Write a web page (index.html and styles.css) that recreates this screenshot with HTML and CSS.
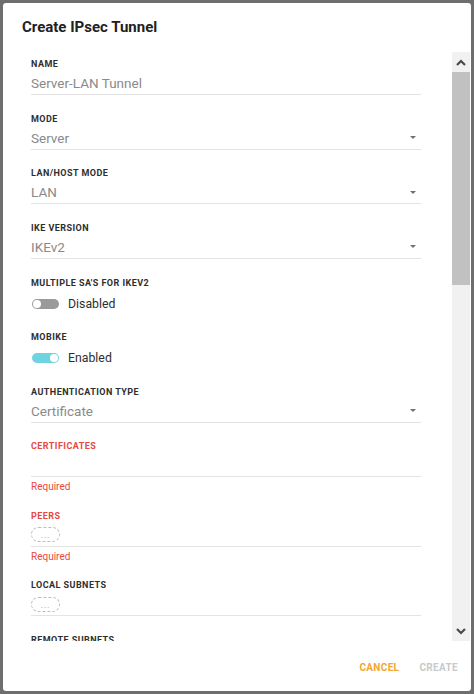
FILE: index.html
```html
<!DOCTYPE html>
<html lang="en">
<head>
<meta charset="utf-8">
<title>Create IPsec Tunnel</title>
<link rel="stylesheet" href="styles.css">
</head>
<body>
<div class="dialog">
  <div class="dialog-title">Create IPsec Tunnel</div>
  <div class="dialog-body">
    <div class="content">
      <div class="field">
        <div class="label">Name</div>
        <div class="input"><span class="value">Server-LAN Tunnel</span></div>
      </div>
      <div class="field">
        <div class="label">Mode</div>
        <div class="input"><span class="value">Server</span><span class="caret"></span></div>
      </div>
      <div class="field">
        <div class="label">LAN/Host Mode</div>
        <div class="input"><span class="value">LAN</span><span class="caret"></span></div>
      </div>
      <div class="field">
        <div class="label">IKE Version</div>
        <div class="input"><span class="value">IKEv2</span><span class="caret"></span></div>
      </div>
      <div class="field toggle-field">
        <div class="label">Multiple SA's for IKEv2</div>
        <div class="toggle-row"><span class="switch"><span class="knob"></span></span><span class="toggle-text">Disabled</span></div>
      </div>
      <div class="field toggle-field">
        <div class="label">MOBIKE</div>
        <div class="toggle-row"><span class="switch on"><span class="knob"></span></span><span class="toggle-text">Enabled</span></div>
      </div>
      <div class="field">
        <div class="label">Authentication Type</div>
        <div class="input"><span class="value">Certificate</span><span class="caret"></span></div>
      </div>
      <div class="field error">
        <div class="label">Certificates</div>
        <div class="input"></div>
        <div class="helper">Required</div>
      </div>
      <div class="field error">
        <div class="label">Peers</div>
        <div class="input"><span class="chip">...</span></div>
        <div class="helper">Required</div>
      </div>
      <div class="field">
        <div class="label">Local Subnets</div>
        <div class="input"><span class="chip">...</span></div>
      </div>
      <div class="field">
        <div class="label">Remote Subnets</div>
        <div class="input"><span class="chip">...</span></div>
      </div>
    </div>
    <div class="scrollbar">
      <div class="sb-btn"><svg width="10" height="7" viewBox="0 0 10 7"><path d="M1 6 L5 2 L9 6" fill="none" stroke="#4a4a4a" stroke-width="2.2"/></svg></div>
      <div class="sb-thumb"></div>
      <div class="sb-track"></div>
      <div class="sb-btn"><svg width="10" height="7" viewBox="0 0 10 7"><path d="M1 1 L5 5 L9 1" fill="none" stroke="#4a4a4a" stroke-width="2.2"/></svg></div>
    </div>
  </div>
  <div class="dialog-footer">
    <span class="btn btn-cancel">Cancel</span>
    <span class="btn btn-create">Create</span>
  </div>
</div>
</body>
</html>
```

FILE: styles.css
```css
html, body {
  margin: 0;
  padding: 0;
}
body {
  background: #6e6e6e;
  font-family: Roboto, "Liberation Sans", Arial, sans-serif;
  padding: 3px 0 0 3px;
  height: 694px;
  box-sizing: border-box;
  overflow: hidden;
}
.dialog {
  width: 468px;
  height: 688px;
  background: #fff;
  border-radius: 3px;
  display: flex;
  flex-direction: column;
  overflow: hidden;
}
.dialog-title {
  height: 49px;
  box-sizing: border-box;
  padding: 15px 0 0 19px;
  font-size: 15px;
  line-height: 18px;
  font-weight: 700;
  color: #212121;
  flex: none;
}
.dialog-body {
  height: 589px;
  flex: none;
  display: flex;
}
.content {
  flex: 1;
  overflow: hidden;
  padding: 6px 31px 0 28px;
}
.field {
  margin-bottom: 17.67px;
}
.label {
  font-size: 9px;
  line-height: 12px;
  height: 12px;
  font-weight: 700;
  letter-spacing: 0.45px;
  text-transform: uppercase;
  color: #2e2e2e;
}
.input {
  margin-top: 2px;
  height: 22px;
  border-bottom: 1px solid #e3e3e3;
  display: flex;
  align-items: center;
  justify-content: space-between;
}
.value {
  font-size: 13.5px;
  color: #8a8a8a;
}
.caret {
  width: 0;
  height: 0;
  border-left: 3.5px solid transparent;
  border-right: 3.5px solid transparent;
  border-top: 3.5px solid #707070;
  margin-right: 5px;
}
.toggle-field {
  margin-bottom: 14.5px;
}
.toggle-row {
  margin-top: 2px;
  height: 26px;
  display: flex;
  align-items: center;
}
.switch {
  width: 27px;
  height: 10px;
  border-radius: 5px;
  background: #9a9a9a;
  display: flex;
  align-items: center;
  padding: 0 1px;
  box-sizing: border-box;
  margin-left: 1px;
}
.switch .knob {
  width: 8px;
  height: 8px;
  border-radius: 50%;
  background: #fff;
}
.switch.on {
  background: #6fd4e1;
  justify-content: flex-end;
}
.toggle-text {
  margin-left: 9px;
  font-size: 12.3px;
  color: #2e2e2e;
}
.field.error {
  margin-bottom: 15.4px;
}
.error .label {
  color: #e8483f;
}
.helper {
  margin-top: 3px;
  font-size: 10px;
  line-height: 14px;
  color: #e8483f;
}
.chip {
  width: 29px;
  height: 15px;
  box-sizing: border-box;
  border: 1px dashed #bdbdbd;
  border-radius: 8px;
  font-size: 9px;
  line-height: 14px;
  color: #9a9a9a;
  text-align: center;
  letter-spacing: 0.8px;
  overflow: hidden;
}
.scrollbar {
  width: 18px;
  margin-right: 1px;
  flex: none;
  display: flex;
  flex-direction: column;
  background: #f1f1f1;
}
.sb-btn {
  height: 20px;
  flex: none;
  display: flex;
  align-items: center;
  justify-content: center;
}
.sb-thumb {
  height: 213px;
  flex: none;
  background: #c1c1c1;
}
.sb-track {
  flex: 1;
}
.dialog-footer {
  flex: 1;
  display: flex;
  justify-content: flex-end;
  align-items: center;
  padding: 2px 13px 0 0;
  gap: 20px;
}
.btn {
  font-size: 10px;
  font-weight: 700;
  letter-spacing: 0.35px;
  text-transform: uppercase;
}
.btn-cancel {
  color: #f2a531;
}
.btn-create {
  color: #c9c9c9;
}
```
